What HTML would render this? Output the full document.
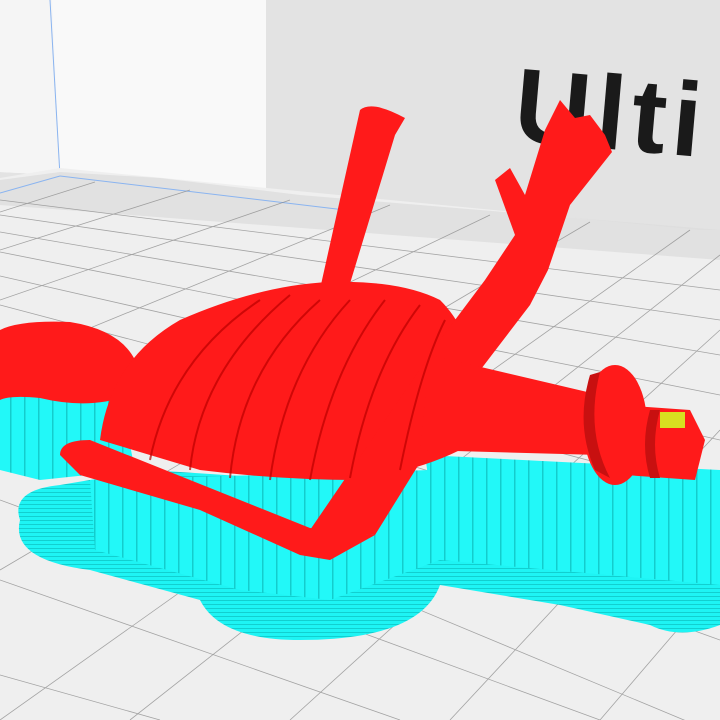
<!DOCTYPE html>
<html><head><meta charset="utf-8"><style>
html,body{margin:0;padding:0;width:720px;height:720px;overflow:hidden;background:#efefef}
svg{display:block}
</style></head><body>
<svg width="720" height="720" viewBox="0 0 720 720" xmlns="http://www.w3.org/2000/svg">
<defs>
<pattern id="rings" width="4" height="4" patternUnits="userSpaceOnUse"><rect width="4" height="4" fill="#1ef4f4"/><rect width="4" height="1" fill="#12cfcf"/></pattern>
<pattern id="cols" width="14" height="10" patternUnits="userSpaceOnUse"><rect width="14" height="10" fill="#22f8f8"/><rect x="10" width="1.5" height="10" fill="#14cccc"/></pattern>
</defs>
<rect x="0" y="0" width="720" height="230" fill="#e3e3e3"/>
<polygon points="0,0 266,0 266,193 160,178 60,175 0,172" fill="#f9f9f9"/>
<polygon points="0,0 52,0 60,175 0,172" fill="#f5f5f5"/>
<line x1="50" y1="0" x2="60" y2="176" stroke="#8ab4f0" stroke-width="1"/>
<polygon points="0,178 60,168 720,232 720,720 0,720" fill="#efefef"/>
<polygon points="0,180 60,172 160,178 300,195 720,230 720,260 0,205" fill="#dcdcdc" opacity="0.7"/>
<line x1="0" y1="193" x2="60" y2="176" stroke="#8ab4f0"/>
<line x1="60" y1="176" x2="345" y2="210" stroke="#8ab4f0"/>
<g stroke="#8a8a8a" stroke-width="0.8" opacity="0.75">
<line x1="0" y1="200" x2="720" y2="290"/>
<line x1="0" y1="215" x2="720" y2="320"/>
<line x1="0" y1="232" x2="720" y2="355"/>
<line x1="0" y1="252" x2="720" y2="395"/>
<line x1="0" y1="276" x2="720" y2="440"/>
<line x1="0" y1="305" x2="720" y2="495"/>
<line x1="0" y1="340" x2="720" y2="560"/>
<line x1="0" y1="382" x2="720" y2="640"/>
<line x1="0" y1="435" x2="720" y2="735"/>
<line x1="0" y1="500" x2="600" y2="720"/>
<line x1="0" y1="580" x2="400" y2="720"/>
<line x1="0" y1="675" x2="160" y2="720"/>
<line x1="0" y1="212" x2="95" y2="182"/>
<line x1="0" y1="250" x2="190" y2="190"/>
<line x1="0" y1="300" x2="290" y2="200"/>
<line x1="0" y1="365" x2="390" y2="205"/>
<line x1="0" y1="450" x2="490" y2="215"/>
<line x1="0" y1="570" x2="590" y2="222"/>
<line x1="0" y1="720" x2="690" y2="230"/>
<line x1="130" y1="720" x2="720" y2="255"/>
<line x1="290" y1="720" x2="720" y2="330"/>
<line x1="450" y1="720" x2="720" y2="430"/>
<line x1="600" y1="720" x2="720" y2="580"/>
</g>
<text x="515" y="148" font-family="Liberation Sans, sans-serif" font-weight="bold" font-size="105" fill="#1a1a1a" transform="rotate(5 600 110)" letter-spacing="6">Ulti</text>
<path d="M20,520 Q10,490 60,485 L150,470 L300,480 L450,470 L560,500 L720,500 L720,625 Q680,640 650,625 L560,605 L440,585 Q420,640 300,640 Q220,640 200,600 L90,570 Q10,560 20,520Z" fill="url(#rings)"/>
<path d="M0,390 L120,395 L135,470 L40,480 L0,470Z" fill="url(#cols)"/>
<path d="M90,480 L430,470 L440,560 L330,600 L240,590 L95,550Z" fill="url(#cols)"/>
<path d="M425,455 L720,470 L720,585 L440,560Z" fill="url(#cols)"/>
<g fill="#ff1a1a">
<path d="M0,330 Q20,320 70,322 Q120,330 135,360 L130,395 Q90,410 40,398 Q10,395 0,400Z"/>
<path d="M360,110 Q372,100 405,118 L395,135 L345,300 L318,298Z"/>
<path d="M100,440 Q110,360 180,320 Q260,285 330,282 Q400,280 440,300 Q470,330 470,370 L460,450 Q420,470 360,480 Q280,480 200,470 Z"/>
<path d="M60,455 Q60,440 90,440 L210,488 L310,528 L375,535 L330,560 L300,555 L200,510 L80,475 Z"/>
<path d="M310,530 L440,340 L485,280 L515,235 L495,180 L510,168 L525,195 L545,130 L560,100 L575,118 L590,115 L605,135 L612,152 L570,205 L548,270 L530,305 L465,390 L375,535 Z"/>
<path d="M430,355 L600,395 L600,455 L420,450Z"/>
<ellipse cx="615" cy="425" rx="32" ry="60"/>
<path d="M620,405 L690,410 L705,440 L695,480 L625,475Z"/>
</g>
<g fill="#c81010">
<path d="M590,375 Q575,425 595,470 L610,478 Q585,430 600,372Z"/>
<path d="M650,410 Q640,445 650,478 L660,478 Q650,445 660,410Z"/>
</g>
<g stroke="#b00" stroke-width="2" fill="none" opacity="0.7">
<path d="M150,460 Q170,360 260,300"/><path d="M190,470 Q200,370 290,295"/><path d="M230,478 Q240,370 320,300"/>
<path d="M270,480 Q285,370 350,300"/><path d="M310,480 Q330,370 385,300"/><path d="M350,478 Q370,370 420,305"/>
<path d="M400,470 Q420,370 445,320"/>
</g>
<rect x="660" y="412" width="25" height="16" fill="#d8e020"/>
</svg>
</body></html>
